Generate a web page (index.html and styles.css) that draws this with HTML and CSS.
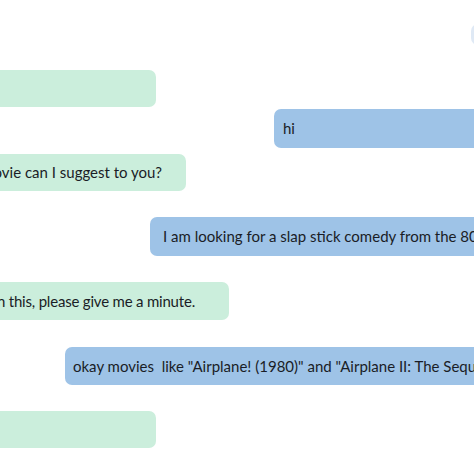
FILE: index.html
```html
<!DOCTYPE html>
<html>
<head>
<meta charset="utf-8">
<link rel="stylesheet" href="styles.css">
</head>
<body>
<div class="chat">
  <div class="row right r0"><div class="bubble blue ghost">&nbsp;</div></div>
  <div class="row left l1"><div class="bubble green">Hello, I am a movie recommender bot.</div></div>
  <div class="row right r2"><div class="bubble blue">hi</div></div>
  <div class="row left l3"><div class="bubble green">What movie can I suggest to you?</div></div>
  <div class="row right r4"><div class="bubble blue">I am looking for a slap stick comedy from the 80's</div></div>
  <div class="row left l5"><div class="bubble green">Let me work on this, please give me a minute.</div></div>
  <div class="row right r6"><div class="bubble blue">okay movies&nbsp; like "Airplane! (1980)" and "Airplane II: The Sequel (1982)"</div></div>
  <div class="row left l7"><div class="bubble green">Here are some suggestions.</div></div>
</div>
</body>
</html>
```

FILE: styles.css
```css
html, body {
  margin: 0;
  padding: 0;
  background: #ffffff;
  overflow: hidden;
  width: 474px;
  height: 474px;
}
.chat {
  display: flex;
  flex-direction: column;
  font-family: "Lato", "Open Sans", sans-serif;
  font-size: 15px;
  color: #1a1d26;
}
.row {
  display: flex;
}
.row.left {
  justify-content: flex-end;
}
.bubble {
  flex-shrink: 0;
  white-space: nowrap;
  height: 38px;
  line-height: 38px;
  box-sizing: border-box;
  border-radius: 7px;
  padding: 0 10px;
}
.right .bubble {
  flex-grow: 1;
  border-top-right-radius: 0;
  border-bottom-right-radius: 0;
}
.left .bubble {
  border-top-left-radius: 0;
  border-bottom-left-radius: 0;
}
.green { background: #cbeedc; }
.blue { background: #9ec3e7; }
.blank { color: transparent; }

.r0 { padding-left: 471px; margin-top: 24px; }
.r0 .bubble { height: 21px; background: #dfe9f5; padding: 0 20px; }
.l1 { width: 156px; margin-top: 25px; }
.l1 .bubble { height: 37px; color: transparent; }
.r2 { padding-left: 274px; margin-top: 2px; }
.r2 .bubble { height: 39px; line-height: 39px; padding-left: 9px; }
.l3 { width: 186px; margin-top: 6px; }
.l3 .bubble { height: 37px; line-height: 37px; padding-right: 24px; }
.r4 { padding-left: 150px; margin-top: 26px; }
.r4 .bubble { height: 39px; line-height: 39px; padding-left: 13px; }
.l5 { width: 229px; margin-top: 26px; }
.l5 .bubble { padding-right: 34px; letter-spacing: -0.2px; }
.r6 { padding-left: 65px; margin-top: 27px; }
.r6 .bubble { padding-left: 8px; }
.l7 { width: 156px; margin-top: 26px; }
.l7 .bubble { height: 37px; color: transparent; }
```
